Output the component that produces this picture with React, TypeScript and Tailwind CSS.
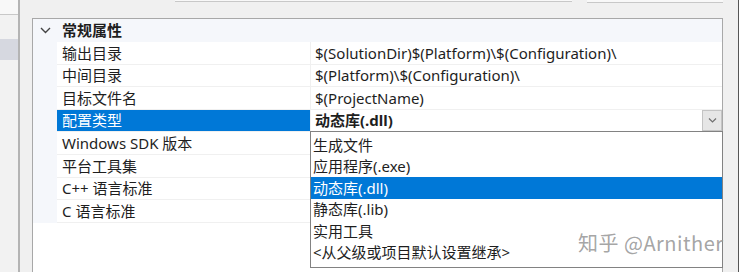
import React from "react";

const rows = [
  { label: "输出目录", value: "$(SolutionDir)$(Platform)\\$(Configuration)\\" },
  { label: "中间目录", value: "$(Platform)\\$(Configuration)\\" },
  { label: "目标文件名", value: "$(ProjectName)" },
  { label: "配置类型", value: "动态库(.dll)", selected: true },
  { label: "Windows SDK 版本", value: "" },
  { label: "平台工具集", value: "" },
  { label: "C++ 语言标准", value: "" },
  { label: "C 语言标准", value: "" },
];

const options = ["生成文件", "应用程序(.exe)", "动态库(.dll)", "静态库(.lib)", "实用工具", "<从父级或项目默认设置继承>"];

const font = "font-['Segoe_UI','Noto_Sans','Noto_Sans_CJK_SC',sans-serif]";

export default function App() {
  return (
    <div className={`relative w-[753px] h-[272px] flex bg-[#f0f0f0] overflow-hidden text-[15px] text-[#1e1e1e] ${font}`}>
      {/* left tree */}
      <div className="w-[20px] shrink-0 flex flex-col border-r-2 border-[#b4b4b4]">
        <div className="h-[15px] shrink-0 bg-[#f8f8f8] border-b border-[#c8c8c8]" />
        <div className="flex-1 bg-[#f2f2f2] pt-[24px]">
          <div className="h-[21px] bg-[#d6d8e0]" />
        </div>
      </div>

      {/* middle */}
      <div className="w-[718px] shrink-0 flex flex-col">
        <div className="h-[18px] shrink-0 flex items-start gap-[15px] pl-[155px]">
          <div className="w-[397px] h-[2px] border-b border-[#c8c8c8] bg-[#f8f8f8]" />
          <div className="w-[136px] h-[3px] border-b border-[#c8c8c8] bg-[#f8f8f8]" />
        </div>
        <div className="flex-1 flex pl-[12px]">
          <div className="relative w-[691px] h-[254px] shrink-0 border border-b-0 border-[#a8a8a8] bg-white">
            {/* header */}
            <div className="h-[23px] flex items-center bg-[#f5f7fb]">
              <svg className="ml-[7px] w-[11px] h-[7px]" viewBox="0 0 11 7">
                <path d="M1 1 L5.5 5.5 L10 1" fill="none" stroke="#444" strokeWidth="1.4" />
              </svg>
              <span className="ml-[11px] font-bold">常规属性</span>
            </div>
            {rows.map((r) => (
              <div key={r.label} className="flex h-[22.6px]">
                <div className="w-[24px] bg-[#f5f7fb]" />
                <div
                  className={`w-[253px] pl-[5px] flex items-center border-b border-[#f0f0f0] ${
                    r.selected ? "bg-[#0078d7] text-white border-[#0078d7]" : ""
                  }`}
                >
                  {r.label}
                </div>
                <div className={`flex-1 flex items-center pl-[4px] border-b border-l border-[#f0f0f0] ${r.selected ? "font-bold" : ""}`}>
                  <span className="flex-1">{r.value}</span>
                  {r.selected && (
                    <div className="w-[20px] h-full flex items-center justify-center bg-[#e6e6e6] border border-[#c4c4c4]">
                      <svg className="w-[9px] h-[5px]" viewBox="0 0 9 5">
                        <path d="M1 0.5 L4.5 4 L8 0.5" fill="none" stroke="#707070" strokeWidth="1.2" />
                      </svg>
                    </div>
                  )}
                </div>
              </div>
            ))}

            {/* dropdown list */}
            <div className="absolute left-[277px] top-[112px] w-[413px] h-[137px] border border-[#828282] bg-white pt-[2px]">
              {options.map((o) => (
                <div
                  key={o}
                  className={`h-[21.5px] flex items-center pl-[2px] ${o === "动态库(.dll)" ? "bg-[#0078d7] text-white" : ""}`}
                >
                  {o}
                </div>
              ))}
            </div>
          </div>
          <div className="flex-1" />
        </div>
      </div>

      {/* right edge */}
      <div className="flex-1 bg-white border-l border-[#555]" />

      {/* watermark */}
      <div className="absolute left-[578px] top-[228px] text-[20px] text-[#9a9a9a]/90 font-['Noto_Sans_CJK_SC','Noto_Sans',sans-serif] tracking-[0.5px]">
        知乎 @Arnither
      </div>
    </div>
  );
}
